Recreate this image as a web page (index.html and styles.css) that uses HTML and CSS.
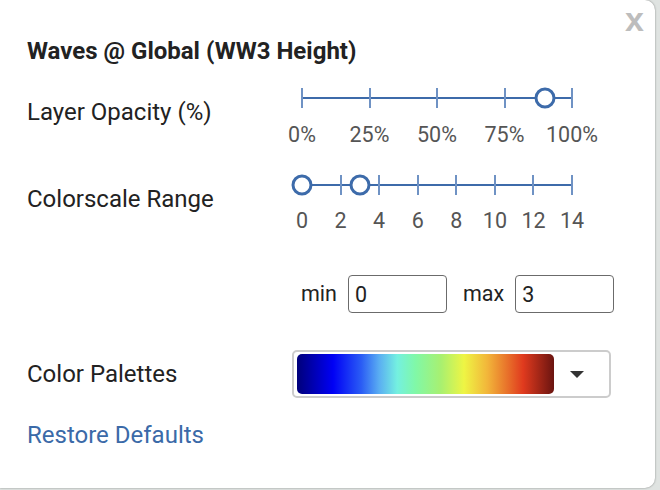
FILE: index.html
```html
<!DOCTYPE html>
<html>
<head>
<meta charset="utf-8">
<link rel="stylesheet" href="styles.css">
</head>
<body>
<div class="panel">
  <button class="close" type="button">x</button>
  <h1 class="title">Waves @ Global (WW3 Height)</h1>

  <div class="row row-opacity">
    <div class="label">Layer Opacity (%)</div>
    <div class="slider">
      <div class="track">
        <span class="tick"></span><span class="tick"></span><span class="tick"></span><span class="tick"></span><span class="tick"></span>
        <div class="handles"><span class="handle" style="left:90%"></span></div>
      </div>
      <div class="ticklabels op">
        <span>0%</span><span>25%</span><span>50%</span><span>75%</span><span>100%</span>
      </div>
    </div>
  </div>

  <div class="row row-range">
    <div class="label">Colorscale Range</div>
    <div class="slider">
      <div class="track">
        <span class="tick"></span><span class="tick"></span><span class="tick"></span><span class="tick"></span><span class="tick"></span><span class="tick"></span><span class="tick"></span><span class="tick"></span>
        <div class="handles">
          <span class="handle" style="left:0%"></span>
          <span class="handle" style="left:21.43%"></span>
        </div>
      </div>
      <div class="ticklabels rng">
        <span>0</span><span>2</span><span>4</span><span>6</span><span>8</span><span>10</span><span>12</span><span>14</span>
      </div>
    </div>
  </div>

  <div class="row row-minmax">
    <div class="label"></div>
    <div class="minmax">
      <label class="mm-label">min</label>
      <input class="mm-input" type="text" value="0">
      <label class="mm-label mm-max">max</label>
      <input class="mm-input" type="text" value="3">
    </div>
  </div>

  <div class="row row-palette">
    <div class="label">Color Palettes</div>
    <div class="palette-select">
      <div class="palette-bar"></div>
      <div class="caret-area"><span class="caret"></span></div>
    </div>
  </div>

  <a class="restore" href="#">Restore Defaults</a>
</div>
</body>
</html>
```

FILE: styles.css
```css
html, body {
  margin: 0;
  padding: 0;
}

body {
  width: 660px;
  height: 490px;
  background: #dfe3e1;
  overflow: hidden;
  font-family: Roboto, "Liberation Sans", sans-serif;
}

.panel {
  position: relative;
  box-sizing: border-box;
  width: 655px;
  height: 488px;
  background: #ffffff;
  border-radius: 0 10px 10px 0;
  box-shadow: 0 0 2px rgba(0, 0, 0, 0.45);
  padding: 37px 0 0 27px;
  color: #222;
}

.close {
  position: absolute;
  top: 2px;
  right: 11px;
  margin: 0;
  padding: 0;
  border: 0;
  background: transparent;
  font-family: "Liberation Sans", Arial, sans-serif;
  font-weight: bold;
  font-size: 34px;
  line-height: 34px;
  color: #bdbdbd;
}

.title {
  margin: 0;
  font-size: 24px;
  line-height: 28px;
  font-weight: bold;
  color: #222;
}

.row {
  display: grid;
  grid-template-columns: 265px auto;
  align-items: start;
}

.label {
  font-size: 24px;
  line-height: 28px;
  color: #222;
}

.row-opacity {
  margin-top: 23px;
}

.row-opacity .label,
.row-range .label {
  margin-top: 10px;
}

.row-range {
  margin-top: 27.5px;
}

.slider {
  padding-left: 9px;
}

.track {
  position: relative;
  width: 272px;
  height: 20px;
  display: flex;
  justify-content: space-between;
  background: linear-gradient(#3d6baa, #3d6baa) center / 100% 2px no-repeat;
}

.tick {
  width: 2px;
  height: 20px;
  background: #6f92c4;
}

.handles {
  position: absolute;
  top: 0;
  bottom: 0;
  left: 1px;
  right: 1px;
}

.handle {
  position: absolute;
  top: 50%;
  width: 21px;
  height: 21px;
  box-sizing: border-box;
  border: 3.5px solid #3d6baa;
  border-radius: 50%;
  background: #fff;
  transform: translate(-50%, -50%);
}

.ticklabels {
  display: flex;
  font-size: 21.5px;
  line-height: 24px;
  color: #555;
}

.ticklabels span {
  flex: 1;
  text-align: center;
  white-space: nowrap;
}

.ticklabels.op {
  margin-top: 15px;
  margin-left: -32.75px;
  width: 337.5px;
}

.ticklabels.rng {
  margin-top: 14.5px;
  margin-left: -18.29px;
  width: 308.57px;
}

.row-minmax {
  margin-top: 42px;
}

.minmax {
  display: flex;
  align-items: center;
  padding-left: 9px;
  height: 38px;
}

.mm-label {
  font-size: 21.5px;
  line-height: 24px;
  color: #222;
  margin-right: 11px;
}

.mm-max {
  margin-left: 16px;
}

.mm-input {
  box-sizing: border-box;
  width: 99px;
  height: 38px;
  margin: 0;
  padding: 0 6px;
  border: 1.5px solid #6b6b6b;
  border-radius: 4px;
  font-family: Roboto, "Liberation Sans", sans-serif;
  font-size: 21.5px;
  color: #222;
  background: #fff;
}

.row-palette {
  margin-top: 37px;
  align-items: center;
}

.palette-select {
  box-sizing: border-box;
  width: 319px;
  height: 48px;
  border: 2px solid #cccccc;
  border-radius: 5px;
  padding: 2px 3px;
  display: flex;
  align-items: center;
}

.palette-bar {
  width: 257px;
  height: 40px;
  border-radius: 5px;
  background: linear-gradient(to right,
    #00007a 0%,
    #0000f5 14%,
    #2a5cf5 25%,
    #5aaef2 32%,
    #74f0e0 39%,
    #80f8a8 46%,
    #a8f070 56%,
    #eef544 65%,
    #f2b63a 74%,
    #e8702a 82%,
    #e03a1e 88%,
    #6a1410 100%);
}

.caret-area {
  flex: 1;
  display: flex;
  padding-left: 16px;
}

.caret {
  width: 0;
  height: 0;
  border-left: 7px solid transparent;
  border-right: 7px solid transparent;
  border-top: 7px solid #333;
}

.restore {
  display: inline-block;
  margin-top: 22.5px;
  font-size: 24px;
  line-height: 28px;
  color: #3b6aa8;
  text-decoration: none;
}
```
